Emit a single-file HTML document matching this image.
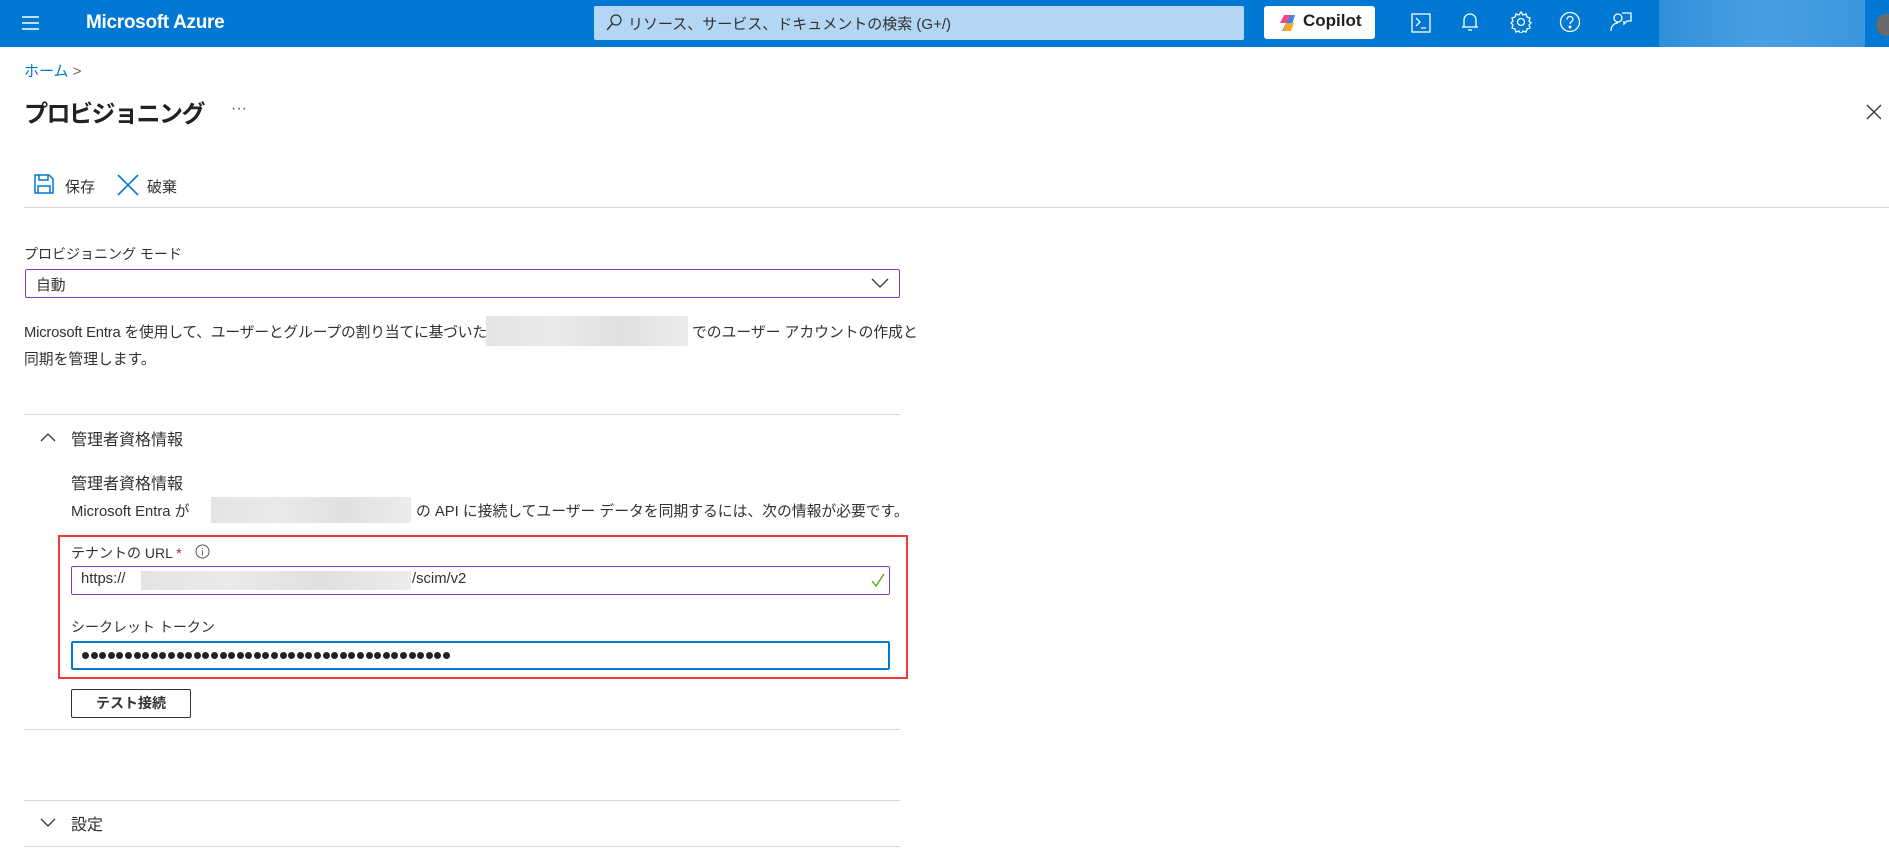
<!DOCTYPE html>
<html><head><meta charset="utf-8"><style>
*{margin:0;padding:0;box-sizing:border-box}
body{width:1889px;height:859px;overflow:hidden;background:#fff;font-family:"Liberation Sans","Noto Sans CJK JP",sans-serif;color:#323130;position:relative;font-size:14.8px}
.a{position:absolute;white-space:nowrap}
.hdr{position:absolute;left:0;top:0;width:1889px;height:47px;background:#0078d4}
.line{position:absolute;height:1px;background:#d6d6d6}
.blur{position:absolute;background:linear-gradient(90deg,#e4e4e4,#eaeaea,#e0e0e0,#ececec);}
svg{position:absolute}
.dots{position:absolute;left:82px;top:652px;display:flex;gap:1.6px}
.dots i{display:block;width:7px;height:7px;border-radius:50%;background:#222}
</style></head><body>
<div class="hdr"></div>
<svg style="left:22px;top:16px" width="18" height="14"><path d="M0 1h17M0 7h17M0 13h17" stroke="#fff" stroke-width="1.5"/></svg>
<div class="a" style="left:86px;top:12px;color:#fff;font-size:19px;font-weight:bold;letter-spacing:-0.3px">Microsoft Azure</div>
<div class="a" style="left:594px;top:6px;width:650px;height:34px;background:#b4d6f5;border-radius:2px"></div>
<svg style="left:606px;top:14px" width="16" height="18"><circle cx="10" cy="6" r="5" fill="none" stroke="#333" stroke-width="1.3"/><path d="M6.5 9.5L1 16" stroke="#333" stroke-width="1.4"/></svg>
<div class="a" style="left:628px;top:13px;font-size:15px;color:#323130">リソース、サービス、ドキュメントの検索 (G+/)</div>
<div class="a" style="left:1264px;top:6px;width:111px;height:33px;background:#fff;border-radius:3px"></div>
<svg style="left:1278px;top:13px" width="20" height="20"><path d="M6 2h8l-4 8H2z" fill="#e84a8a"/><path d="M14 2h3l-5 16H4l4-8z" fill="#2f8af0"/><path d="M8 10h8l-3 8H5z" fill="#f5a623"/></svg>
<div class="a" style="left:1303px;top:11px;font-size:17px;color:#222;font-weight:bold">Copilot</div>
<svg style="left:1411px;top:13px" width="20" height="20" fill="none" stroke="#fff" stroke-width="1.3"><rect x="1" y="1" width="18" height="18"/><path d="M5 5l4 4-4 4M10 15h5"/></svg>
<svg style="left:1461px;top:11px" width="18" height="22" fill="none" stroke="#fff" stroke-width="1.3"><path d="M3 16V9a6 6 0 0112 0v7H3zM1 16h16M7 19h4"/></svg>
<svg style="left:1510px;top:11px" width="22" height="22" fill="none" stroke="#fff" stroke-width="1.3"><circle cx="11" cy="11" r="3.5"/><path d="M11 1l2 3 3-1 1 3 3 1-1 3 2 2-2 2 1 3-3 1-1 3-3-1-2 3-2-3-3 1-1-3-3-1 1-3-2-2 2-2-1-3 3-1 1-3 3 1z"/></svg>
<svg style="left:1559px;top:11px" width="22" height="22" fill="none" stroke="#fff" stroke-width="1.3"><circle cx="11" cy="11" r="9.5"/><path d="M8 8.5a3 3 0 116 0c0 2-3 2-3 4.5"/><circle cx="11" cy="16" r=".8" fill="#fff"/></svg>
<svg style="left:1610px;top:11px" width="22" height="22" fill="none" stroke="#fff" stroke-width="1.3"><circle cx="8" cy="7" r="4"/><path d="M1 20c0-5 3-8 7-8M12 2h9v8h-4l-3 3v-3"/></svg>
<div class="a" style="left:1659px;top:0;width:206px;height:47px;background:linear-gradient(90deg,#2f8fdc,#4a9fe2,#3b96de)"></div>
<div class="a" style="left:1876px;top:14px;width:20px;height:22px;border-radius:50%;background:#6a6a6a"></div>

<div class="a" style="left:24px;top:60px;color:#0078d4;font-size:15px">ホーム <span style="color:#666">&gt;</span></div>
<div class="a" style="left:24px;top:94px;font-size:24px;font-weight:bold;color:#222;letter-spacing:-1.5px">プロビジョニング</div>
<div class="a" style="left:231px;top:100px;font-size:16px;color:#555">···</div>
<svg style="left:1866px;top:104px" width="16" height="16"><path d="M1 1l14 14M15 1L1 15" stroke="#333" stroke-width="1.3"/></svg>

<svg style="left:34px;top:174px" width="20" height="20" fill="none" stroke="#0078d4" stroke-width="1.5"><path d="M1 1h14l4 4v14H1z"/><path d="M5 1v5h9V1M4 19v-7h12v7"/></svg>
<div class="a" style="left:65px;top:176px;font-size:15px">保存</div>
<svg style="left:117px;top:174px" width="22" height="22"><path d="M1 1l20 20M21 1L1 21" stroke="#0078d4" stroke-width="1.6"/></svg>
<div class="a" style="left:147px;top:176px;font-size:15px">破棄</div>
<div class="line" style="left:24px;top:207px;width:1865px"></div>

<div class="a" style="left:24px;top:244px;font-size:14px">プロビジョニング モード</div>
<div class="a" style="left:25px;top:269px;width:875px;height:29px;border:1px solid #8a3ab9;border-radius:2px"></div>
<div class="a" style="left:36px;top:274px">自動</div>
<svg style="left:871px;top:278px" width="18" height="11"><path d="M1 1l8 8 8-8" fill="none" stroke="#333" stroke-width="1.3"/></svg>
<div class="a" style="left:24px;top:321px;letter-spacing:-0.2px">Microsoft Entra を使用して、ユーザーとグループの割り当てに基づいた</div>
<div class="blur" style="left:486px;top:316px;width:202px;height:30px"></div>
<div class="a" style="left:692px;top:321px">でのユーザー アカウントの作成と</div>
<div class="a" style="left:24px;top:348px">同期を管理します。</div>

<div class="line" style="left:24px;top:414px;width:876px"></div>
<svg style="left:40px;top:432px" width="16" height="10"><path d="M1 9l7-7 7 7" fill="none" stroke="#333" stroke-width="1.3"/></svg>
<div class="a" style="left:71px;top:426px;font-size:16px">管理者資格情報</div>
<div class="a" style="left:71px;top:470px;font-size:16px">管理者資格情報</div>
<div class="a" style="left:71px;top:500px">Microsoft Entra が</div>
<div class="blur" style="left:211px;top:497px;width:200px;height:26px"></div>
<div class="a" style="left:416px;top:500px">の API に接続してユーザー データを同期するには、次の情報が必要です。</div>

<div class="a" style="left:58px;top:535px;width:850px;height:144px;border:2px solid #f03a3a"></div>
<div class="a" style="left:71px;top:543px;font-size:14px">テナントの URL <span style="color:#a4262c">*</span></div>
<svg style="left:195px;top:544px" width="15" height="15" fill="none" stroke="#555"><circle cx="7.5" cy="7.5" r="6.5"/><path d="M7.5 6.5v5M7.5 4v1"/></svg>
<div class="a" style="left:71px;top:566px;width:819px;height:29px;border:1px solid #8a3ab9;border-radius:2px"></div>
<div class="a" style="left:81px;top:571px">https://</div>
<div class="blur" style="left:141px;top:571px;width:270px;height:19px"></div>
<div class="a" style="left:412px;top:571px">/scim/v2</div>
<svg style="left:871px;top:573px" width="14" height="14"><path d="M1 8l4 5 8-12" fill="none" stroke="#57a300" stroke-width="1.3"/></svg>
<div class="a" style="left:71px;top:617px;font-size:14px">シークレット トークン</div>
<div class="a" style="left:71px;top:641px;width:819px;height:29px;border:2px solid #0078d4;border-radius:2px"></div>
<div class="dots"><i></i><i></i><i></i><i></i><i></i><i></i><i></i><i></i><i></i><i></i><i></i><i></i><i></i><i></i><i></i><i></i><i></i><i></i><i></i><i></i><i></i><i></i><i></i><i></i><i></i><i></i><i></i><i></i><i></i><i></i><i></i><i></i><i></i><i></i><i></i><i></i><i></i><i></i><i></i><i></i><i></i><i></i><i></i></div>

<div class="a" style="left:71px;top:689px;width:120px;height:29px;border:1px solid #323130;border-radius:2px;font-size:14px;font-weight:bold;text-align:center;line-height:27px">テスト接続</div>
<div class="line" style="left:24px;top:729px;width:876px"></div>
<div class="line" style="left:24px;top:800px;width:876px"></div>
<svg style="left:40px;top:818px" width="16" height="10"><path d="M1 1l7 7 7-7" fill="none" stroke="#333" stroke-width="1.3"/></svg>
<div class="a" style="left:71px;top:811px;font-size:16px">設定</div>
<div class="line" style="left:24px;top:846px;width:876px"></div>
</body></html>
